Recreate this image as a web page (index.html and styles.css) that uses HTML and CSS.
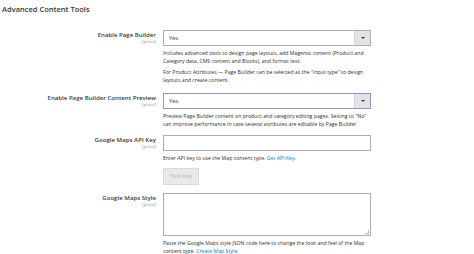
FILE: index.html
```html
<!DOCTYPE html>
<html>
<head>
<meta charset="utf-8">
<link rel="stylesheet" href="styles.css">
</head>
<body>
<div class="page">
  <h1 class="title">Advanced Content Tools</h1>
  <div class="row r1">
    <div class="label"><div class="name">Enable Page Builder</div><div class="scope">[global]</div></div>
    <div class="control">
      <div class="select"><span class="val">Yes</span><span class="arrow"><span class="tri"></span></span></div>
      <p class="note">Includes advanced tools to design page layouts, add Magento content (Product and Category data, CMS content and Blocks), and format text.</p>
      <p class="note gap">For Product Attributes — Page Builder can be selected as the "input type" to design layouts and create content.</p>
    </div>
  </div>
  <div class="row r2">
    <div class="label"><div class="name">Enable Page Builder Content Preview</div><div class="scope">[global]</div></div>
    <div class="control">
      <div class="select focus"><span class="val">Yes</span><span class="arrow"><span class="tri"></span></span></div>
      <p class="note">Preview Page Builder content on product and category editing pages. Setting to "No" can improve performance in case several attributes are editable by Page Builder.</p>
    </div>
  </div>
  <div class="row r3">
    <div class="label"><div class="name">Google Maps API Key</div><div class="scope">[global]</div></div>
    <div class="control">
      <div class="input"></div>
      <p class="note">Enter API key to use the Map content type. <a>Get API Key</a>.</p>
      <div class="btn">Test Key</div>
    </div>
  </div>
  <div class="row r4">
    <div class="label"><div class="name">Google Maps Style</div><div class="scope">[global]</div></div>
    <div class="control">
      <div class="textarea"><span class="grip"></span></div>
      <p class="note">Paste the Google Maps style JSON code here to change the look and feel of the Map content type. <a>Create Map Style</a>.</p>
    </div>
  </div>
</div>
</body>
</html>
```
FILE: styles.css
```css
html, body { margin: 0; padding: 0; background: #fff; }
body { font-family: "Open Sans", "DejaVu Sans", sans-serif; color: #303030; width: 474px; height: 254px; overflow: hidden; }
.page { padding: 3px 0 0 2px; }
.title { margin: 0; font-size: 7.5px; font-weight: 600; color: #41362f; line-height: 12px; }
.row { display: flex; }
.r1 { margin-top: 15px; }
.r2 { margin-top: 9px; }
.r3 { margin-top: 7px; }
.r4 { margin-top: 8px; }
.label { width: 154px; text-align: right; padding-top: 1px; }
.name { font-size: 6.1px; font-weight: 600; line-height: 8px; color: #3a3a3a; }
.scope { font-size: 4px; color: #999; line-height: 5px; }
.control { margin-left: 7px; width: 208px; }
.select { height: 14px; border: 1px solid #adadad; display: flex; background: #fff; }
.select.focus { border-color: #8a96c8; }
.val { flex: 1; font-size: 5.8px; line-height: 14px; padding-left: 5px; color: #303030; }
.arrow { width: 15px; background: #e3e3e3; border-left: 1px solid #d4d4d4; display: flex; align-items: center; justify-content: center; }
.tri { width: 0; height: 0; border-left: 2px solid transparent; border-right: 2px solid transparent; border-top: 2px solid #41362f; }
.note { margin: 3px 0 0; font-size: 5.2px; line-height: 8px; color: #303030; }
.note.gap { margin-top: 3px; }
.note a { color: #007bdb; }
.input { height: 14px; border: 1px solid #adadad; }
.btn { margin-top: 6px; width: 36px; height: 17px; background: #e9e9e9; border: 1px solid #dadada; color: #b8b8b8; font-size: 5.8px; line-height: 15px; text-align: center; box-sizing: border-box; }
.textarea { height: 41px; border: 1px solid #adadad; position: relative; }
.grip { position: absolute; right: 1px; bottom: 1px; width: 3px; height: 3px; border-right: 1px solid #bbb; border-bottom: 1px solid #bbb; }
```
